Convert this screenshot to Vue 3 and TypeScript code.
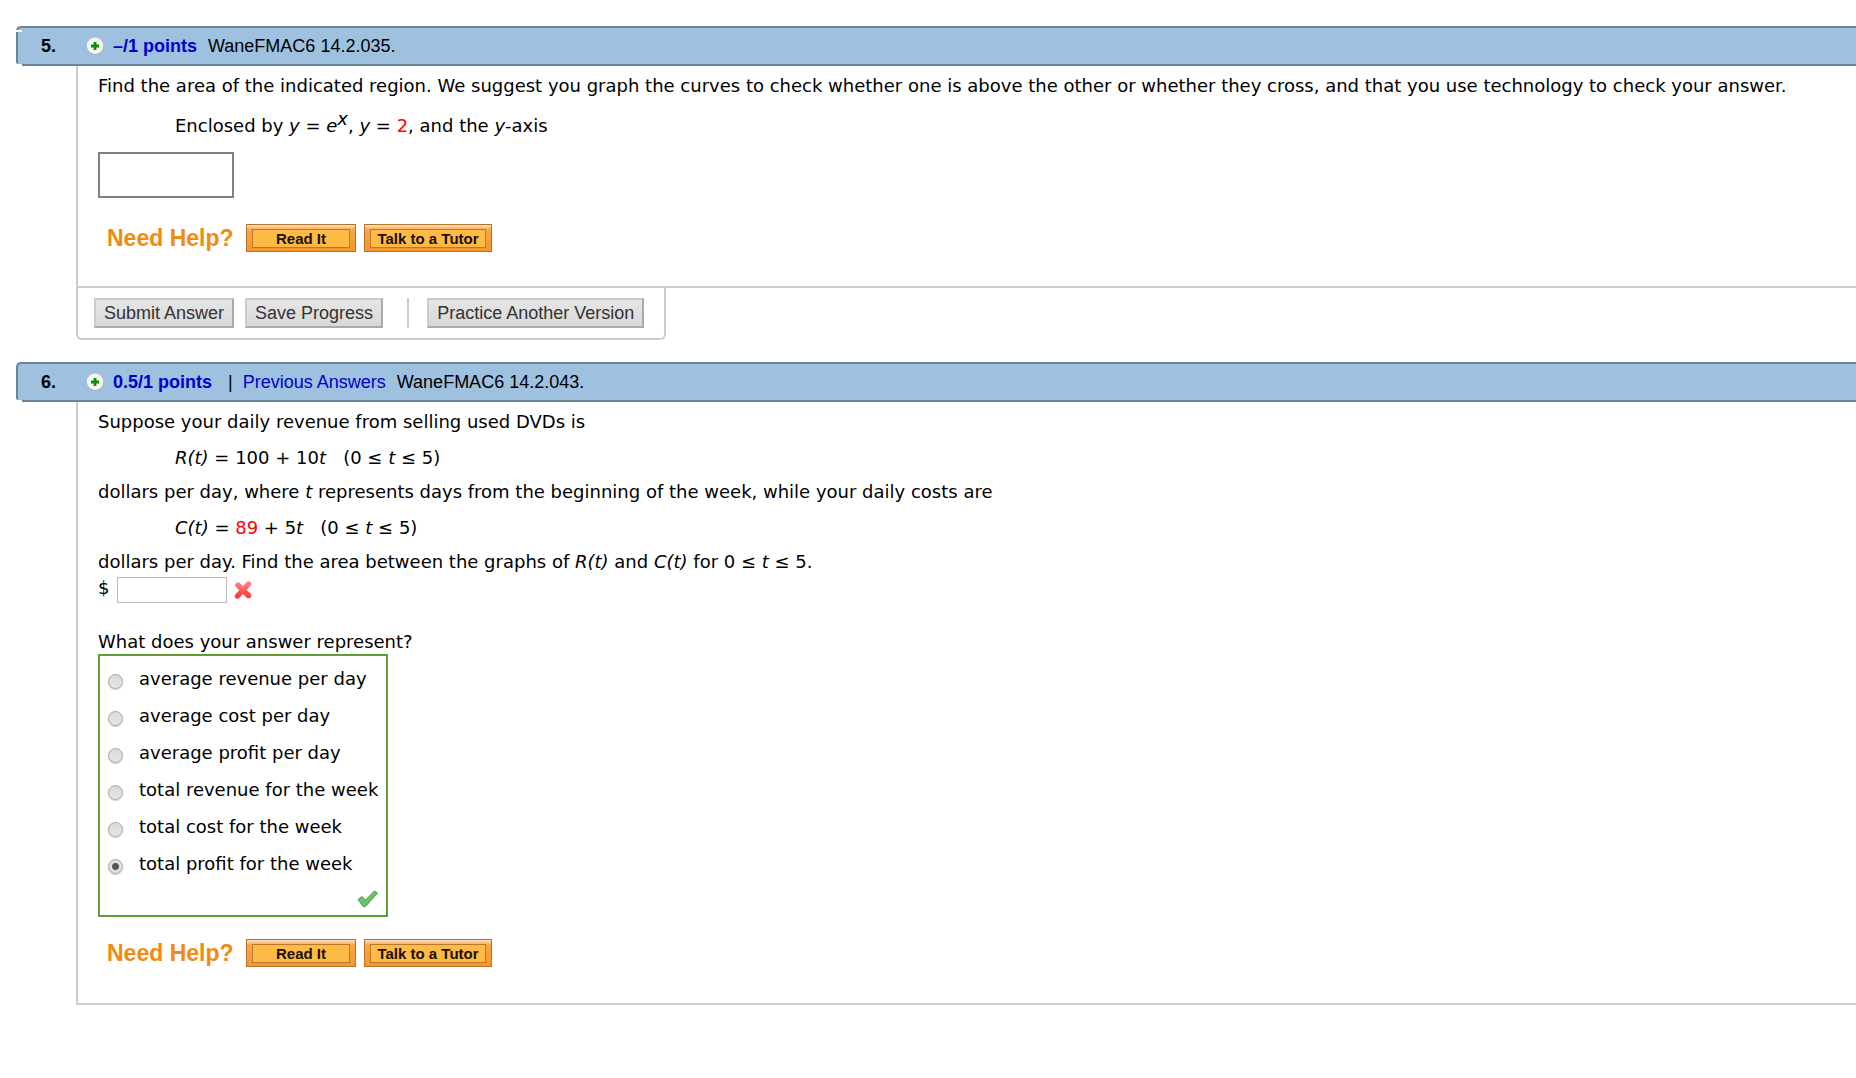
<script setup lang="ts">
import { ref } from 'vue'

interface Option {
  id: string
  label: string
}

const areaAnswer = ref('')
const dollarAnswer = ref('')
const meaning = ref('total-profit')

const options: Option[] = [
  { id: 'average-revenue', label: 'average revenue per day' },
  { id: 'average-cost', label: 'average cost per day' },
  { id: 'average-profit', label: 'average profit per day' },
  { id: 'total-revenue', label: 'total revenue for the week' },
  { id: 'total-cost', label: 'total cost for the week' },
  { id: 'total-profit', label: 'total profit for the week' },
]
</script>

<template>
  <main class="page">
    <section class="question">
      <header class="bar">
        <span class="cap notched"></span>
        <div class="bar-main">
          <b class="number">5.</b>
          <button class="expand" type="button" aria-label="Show details">
            <svg viewBox="0 0 18 18" width="18" height="18">
              <circle cx="9" cy="9.4" r="8.6" fill="#a9b4bc" />
              <circle cx="9" cy="8.8" r="8.2" fill="#f8f6f4" />
              <path d="M9 5v8M5 9h8" stroke="#0a8f0a" stroke-width="2.8" />
            </svg>
          </button>
          <a class="points" href="#">–/1 points</a>
          <span class="source">WaneFMAC6 14.2.035.</span>
        </div>
      </header>

      <div class="body">
        <p>
          Find the area of the indicated region. We suggest you graph the curves to check whether
          one is above the other or whether they cross, and that you use technology to check your
          answer.
        </p>
        <p class="formula first">
          Enclosed by <i>y</i> = <i>e<sup>x</sup></i>, <i>y</i> = <span class="red">2</span>, and the <i>y</i>-axis
        </p>
        <input v-model="areaAnswer" class="area-input" type="text" aria-label="Area" />
        <div class="help">
          <span class="help-title">Need Help?</span>
          <button class="help-button read" type="button"><span>Read It</span></button>
          <button class="help-button talk" type="button"><span>Talk to a Tutor</span></button>
        </div>
      </div>

      <footer class="actions">
        <button type="button">Submit Answer</button>
        <button type="button">Save Progress</button>
        <span class="divider"></span>
        <button type="button">Practice Another Version</button>
      </footer>
    </section>

    <section class="question">
      <header class="bar">
        <span class="cap"></span>
        <div class="bar-main">
          <b class="number">6.</b>
          <button class="expand" type="button" aria-label="Show details">
            <svg viewBox="0 0 18 18" width="18" height="18">
              <circle cx="9" cy="9.4" r="8.6" fill="#a9b4bc" />
              <circle cx="9" cy="8.8" r="8.2" fill="#f8f6f4" />
              <path d="M9 5v8M5 9h8" stroke="#0a8f0a" stroke-width="2.8" />
            </svg>
          </button>
          <a class="points" href="#">0.5/1 points</a>
          <span class="pipe">|</span>
          <a class="previous" href="#">Previous Answers</a>
          <span class="source">WaneFMAC6 14.2.043.</span>
        </div>
      </header>

      <div class="body">
        <p>Suppose your daily revenue from selling used DVDs is</p>
        <p class="formula">
          <i>R(t)</i> = 100 + 10<i>t</i>&nbsp;&nbsp; (0 ≤ <i>t</i> ≤ 5)
        </p>
        <p>
          dollars per day, where <i>t</i> represents days from the beginning of the week, while your
          daily costs are
        </p>
        <p class="formula">
          <i>C(t)</i> = <span class="red">89</span> + 5<i>t</i>&nbsp;&nbsp; (0 ≤ <i>t</i> ≤ 5)
        </p>
        <p>
          dollars per day. Find the area between the graphs of <i>R(t)</i> and <i>C(t)</i> for 0 ≤
          <i>t</i> ≤ 5.
        </p>
        <div class="dollar-row">
          <label for="dollars">$</label>
          <input id="dollars" v-model="dollarAnswer" type="text" />
          <svg viewBox="0 0 18 20" width="18" height="20" role="img" aria-label="Incorrect">
            <defs>
              <linearGradient id="cross" x1="0" y1="0" x2="0" y2="20" gradientUnits="userSpaceOnUse">
                <stop offset="0.2" stop-color="#ff7d7d" />
                <stop offset="0.8" stop-color="#fb3c3c" />
              </linearGradient>
            </defs>
            <path d="M4 5l10.500 10.500M14.500 4L3.500 16" stroke="url(#cross)" stroke-width="5.400" stroke-linecap="round" />
          </svg>
        </div>

        <p id="meaning-label" class="prompt">What does your answer represent?</p>
        <div class="choices" role="radiogroup" aria-labelledby="meaning-label">
          <label v-for="option in options" :key="option.id" class="choice">
            <input v-model="meaning" type="radio" name="meaning" :value="option.id" />
            <span>{{ option.label }}</span>
          </label>
          <svg class="check" viewBox="0 0 22 18" width="22" height="18" role="img" aria-label="Correct">
            <path d="M2 9.500l4-3 3.500 3.500L18.500 1l3 2L9.500 16.500 7 16.500z" fill="#6cc06a" stroke="#4b9e4b" stroke-linejoin="round" />
          </svg>
        </div>

        <div class="help">
          <span class="help-title">Need Help?</span>
          <button class="help-button read" type="button"><span>Read It</span></button>
          <button class="help-button talk" type="button"><span>Talk to a Tutor</span></button>
        </div>
      </div>
    </section>
  </main>
</template>

<style>
body {
  margin: 0;
  background: #fff;
}
</style>

<style scoped>
.page {
  padding: 26px 0 72px 16px;
  font: 18px/22px Verdana, 'DejaVu Sans', sans-serif;
  color: #000;
  overflow: hidden;
}

.page *,
.page *::before {
  box-sizing: border-box;
}

.question + .question {
  margin-top: 22px;
}

button {
  margin: 0;
  padding: 0;
  border: 0;
  background: none;
  font: 18px/22px Arial, 'Liberation Sans', sans-serif;
}

a {
  color: #0000cc;
  text-decoration: none;
}

.bar {
  display: flex;
  height: 40px;
  font: 18px/22px Arial, 'Liberation Sans', sans-serif;
}

.cap {
  position: relative;
  width: 6px;
  height: 38px;
  border: solid #6b8496;
  border-width: 2px 0 0 2px;
  border-radius: 5px 0 0 2px;
  background: #9dc1de;
}

.cap.notched::before {
  content: '';
  position: absolute;
  top: 2px;
  left: -2px;
  width: 6px;
  height: 2px;
  background: #fff;
}

.bar-main {
  flex: 1;
  display: flex;
  align-items: center;
  border: solid #6b8496;
  border-width: 2px 0;
  background: #9dc1de;
  padding-left: 19px;
  white-space: nowrap;
}

.number {
  width: 45px;
}

.expand {
  height: 18px;
  margin-right: 9px;
}

.expand svg {
  display: block;
}

.points {
  font-weight: bold;
}

.pipe {
  margin: 0 10px 0 16px;
}

.source {
  margin-left: 11px;
}

.body {
  margin-left: 60px;
  padding: 9px 0 34px 20px;
  border: solid #ccc;
  border-width: 0 0 2px 2px;
}

.body:last-child {
  padding-bottom: 36px;
}

p {
  margin: 0;
}

.formula {
  margin: 14px 0 12px 77px;
}

.formula.first {
  margin: 18px 0 15px 77px;
}

sup {
  font-size: 18px;
  line-height: 0;
  vertical-align: 7px;
}

.red {
  color: #f00;
}

.area-input {
  display: block;
  width: 136px;
  height: 46px;
  border: 2px solid #808080;
  background: #fff;
  padding: 2px 6px;
  font: inherit;
}

.help {
  display: flex;
  align-items: center;
  margin-top: 26px;
  padding-left: 9px;
}

.choices + .help {
  margin-top: 22px;
}

.help-title {
  width: 139px;
  font: bold 23px/28px Arial, 'Liberation Sans', sans-serif;
  color: #f08a10;
}

.help-button {
  height: 28px;
  padding: 4px 5px;
  border: 1px solid #b4732b;
  background: linear-gradient(#fde3c4, #f9a545 5px, #f7942d);
}

.help-button span {
  display: block;
  height: 19px;
  border: 1px solid #b9792d;
  background: #fdba45;
  font: bold 15px/17px Arial, 'Liberation Sans', sans-serif;
  color: #1c1000;
  white-space: nowrap;
}

.read {
  width: 110px;
  margin-right: 8px;
}

.talk {
  width: 128px;
}

.actions {
  display: flex;
  align-items: flex-start;
  width: 590px;
  height: 52px;
  margin-left: 60px;
  padding: 10px 0 0 16px;
  border: solid #ccc;
  border-width: 0 2px 2px;
  border-radius: 0 0 6px 6px;
}

.actions button {
  height: 30px;
  padding: 0 8px 1px;
  border: 2px solid;
  border-color: #ccc #aaa #aaa #ccc;
  background: linear-gradient(#e6e6e6, #d8d8d8);
  color: #333;
  white-space: nowrap;
}

.actions button + button {
  margin-left: 11px;
}

.divider {
  width: 2px;
  height: 30px;
  margin: 0 18px 0 24px;
  background: #ccc;
}

.dollar-row {
  display: flex;
  margin-top: 4px;
  height: 26px;
}

.dollar-row label {
  width: 19px;
}

.dollar-row input {
  width: 110px;
  height: 26px;
  margin-right: 7px;
  padding: 1px 4px;
  border: 1px solid #bbb;
  background: #fff;
  font: inherit;
}

.dollar-row svg {
  margin-top: 3px;
  fill: none;
}

.prompt {
  margin: 28px 0 1px;
}

.choices {
  display: flex;
  flex-direction: column;
  width: max-content;
  padding: 4px 8px 7px;
  border: 2px solid #5f9f35;
}

.choice {
  display: flex;
  align-items: center;
  height: 37px;
}

.choice input {
  appearance: none;
  width: 15px;
  height: 15px;
  margin: 5px 16px 0 0;
  border: 1px solid #a6a6a6;
  border-radius: 50%;
  background: linear-gradient(#dadada, #e6e6e6);
  box-shadow: 0 1px 1px #ccc;
}

.choice input:checked {
  background: radial-gradient(circle, #555 3px, #e0e0e0 4px);
}

.check {
  align-self: flex-end;
  margin-top: 8px;
}
</style>
